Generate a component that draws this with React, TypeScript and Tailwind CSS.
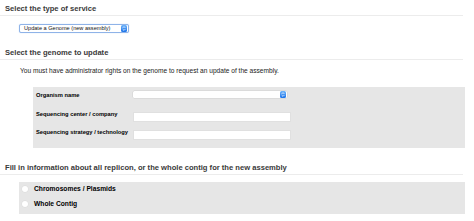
import React from "react";

const font = { fontFamily: '"Liberation Sans", Arial, sans-serif' };

function Stepper() {
  return (
    <span className="flex h-[7px] w-[6px] flex-col items-center justify-center rounded-[1.5px] bg-gradient-to-b from-[#6cb3fa] to-[#1a73e8]">
      <svg width="4" height="5" viewBox="0 0 4 5">
        <path d="M0.6 2 L2 0.6 L3.4 2" fill="none" stroke="white" strokeWidth="0.7" />
        <path d="M0.6 3 L2 4.4 L3.4 3" fill="none" stroke="white" strokeWidth="0.7" />
      </svg>
    </span>
  );
}

function Heading({ children }: { children: React.ReactNode }) {
  return (
    <div className="h-[15px] w-[463px] border-b border-[#ececec] pl-[5px] text-[7.6px] font-bold leading-[15px] text-[#3a3a3a]">
      {children}
    </div>
  );
}

function Radio({ label }: { label: string }) {
  return (
    <div className="flex h-[8px] items-center">
      <span className="ml-[3px] h-[6px] w-[6px] rounded-full bg-white shadow-[0_0_0_0.5px_#dcdcdc]" />
      <span className="ml-[6px] text-[6.7px] font-bold leading-[8px] text-black">{label}</span>
    </div>
  );
}

export default function App() {
  return (
    <div style={font} className="flex h-[221px] w-[474px] flex-col overflow-hidden bg-white pt-[1px]">
      <Heading>Select the type of service</Heading>
      <div className="ml-[19px] mt-[8px] flex h-[9px] w-[110px] items-center justify-between rounded-[2px] border border-[#8fb3e8] bg-white pl-[4px] pr-[1px] shadow-[0_0_1px_#9ec5f5]">
        <span className="text-[5.6px] leading-[7px] text-[#111]">Update a Genome (new assembly)</span>
        <Stepper />
      </div>

      <div className="mt-[12px]">
        <Heading>Select the genome to update</Heading>
      </div>
      <p className="ml-[20px] mt-[6px] text-[6.6px] leading-[10px] text-[#222]">
        You must have administrator rights on the genome to request an update of the assembly.
      </p>

      <div className="ml-[33px] mt-[11px] flex h-[61px] w-[432px] flex-col bg-[#e6e6e6] pl-[3px] pt-[4px]">
        <div className="flex items-start">
          <span className="w-[97px] text-[5.75px] font-bold leading-[8px] text-black">Organism name</span>
          <div className="flex h-[7px] w-[154px] items-center justify-end rounded-[1.5px] bg-white pr-[1px] shadow-[0_0_0_0.5px_#d0d0d0]">
            <Stepper />
          </div>
        </div>
        <div className="mt-[13px] flex items-start">
          <span className="w-[97px] text-[5.75px] font-bold leading-[5px] text-black">Sequencing center / company</span>
          <div className="h-[10px] w-[158px] border border-[#e0e0e0] bg-white" />
        </div>
        <div className="mt-[8px] flex items-start">
          <span className="w-[97px] text-[5.75px] font-bold leading-[5px] text-black">Sequencing strategy / technology</span>
          <div className="h-[10px] w-[158px] border border-[#e0e0e0] bg-white" />
        </div>
      </div>

      <div className="mt-[12px]">
        <Heading>Fill in information about all replicon, or the whole contig for the new assembly</Heading>
      </div>
      <div className="ml-[19px] mt-[7px] flex h-[32px] w-[446px] flex-col gap-[7px] bg-[#e6e6e6] pt-[3px]">
        <Radio label="Chromosomes / Plasmids" />
        <Radio label="Whole Contig" />
      </div>
    </div>
  );
}
